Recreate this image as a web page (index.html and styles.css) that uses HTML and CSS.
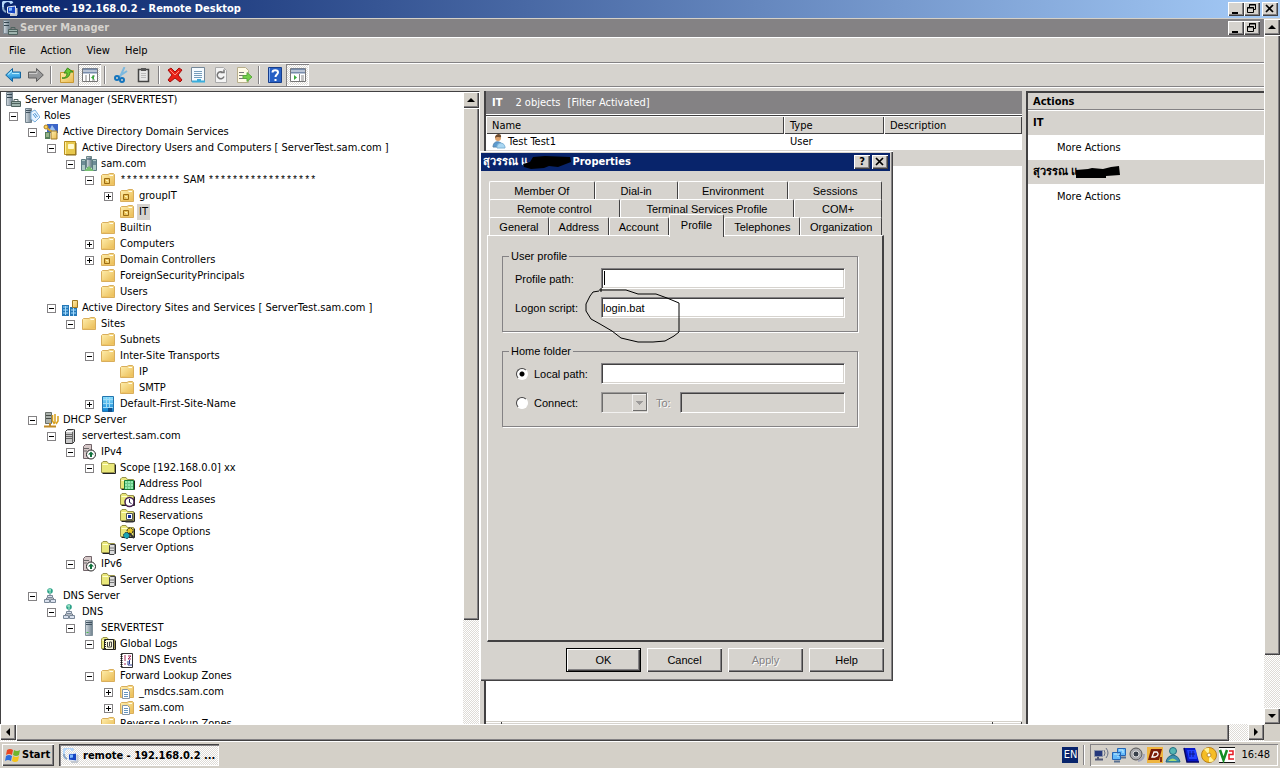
FILE: index.html
```html
<!DOCTYPE html>
<html lang="en">
<head>
<meta charset="utf-8">
<title>remote - 192.168.0.2 - Remote Desktop</title>
<link rel="stylesheet" href="styles.css">
</head>
<body>
<svg class="defs" aria-hidden="true">
  <defs>
    <linearGradient id="gold" x1="0" y1="0" x2="1" y2="1"><stop offset="0" stop-color="#fff0b0"/><stop offset="1" stop-color="#e9b94f"/></linearGradient>
    <linearGradient id="steel" x1="0" y1="0" x2="1" y2="0"><stop offset="0" stop-color="#d5dde3"/><stop offset="1" stop-color="#6d7f8c"/></linearGradient>
    <linearGradient id="sky" x1="0" y1="0" x2="0" y2="1"><stop offset="0" stop-color="#8be0ff"/><stop offset="1" stop-color="#0a7fd0"/></linearGradient>
  </defs>
  <symbol id="folder" viewBox="0 0 16 16"><path d="M1.500 13.500V3.500l1-1H8L9.500 1.500H13.500L14.500 2.500V13.500z" fill="url(#gold)" stroke="#d9ae5c"/><path d="M9.500 3.500H13" stroke="#fffdf0"/><path d="M2.500 12.500H14" stroke="#efc565"/></symbol>
  <symbol id="ou" viewBox="0 0 16 16"><use href="#folder"/><path d="M4.500 6.500h5v5h-5z" fill="#e8bf55" stroke="#9a6b12"/><path d="M6 8.500h2v2" stroke="#fff3b8" fill="none"/></symbol>
  <symbol id="yfolder" viewBox="0 0 16 16"><path d="M1.500 12.500V3l1.500-1.500h4L8.500 3.500h6v9z" fill="#e9e77a" stroke="#98934a"/><path d="M2.500 13.500h13V4.500" fill="none" stroke="#222"/><path d="M2.500 4.500H8" stroke="#ffffcf"/></symbol>
  <symbol id="server" viewBox="0 0 16 16"><path d="M4.500.5h7v15h-7z" fill="url(#steel)" stroke="#80909a"/><path d="M5 2.500h6M5 4.500h6" stroke="#40525f"/><path d="M5.500 12.500h2" stroke="#4bc04b"/></symbol>
  <symbol id="manager" viewBox="0 0 16 16"><path d="M1.500.5h6v13h-6z" fill="url(#steel)" stroke="#7d8b94"/><path d="M2 2.500h5M2 5.500h5" stroke="#33454f"/><path d="M6.500 9.500h9v5h-9z" fill="#9fb4ae" stroke="#4e625e"/><path d="M9 9.500v-2h4v2M6 11.500h9" fill="none" stroke="#4e625e"/></symbol>
  <symbol id="roles" viewBox="0 0 16 16"><path d="M1.500.5h6v14h-6z" fill="url(#steel)" stroke="#72828c"/><path d="M2 2.500h5M2 4.500h5" stroke="#41525e"/><path d="M7 4l4-2 5 7-5 5-4-3z" fill="#e8f4ff" stroke="#7ab0de"/><path d="M9 6l3 4M10.500 5l3 4" stroke="#4a94d4"/></symbol>
  <symbol id="adds" viewBox="0 0 16 16"><path d="M4 0h11v9H4z" fill="#3c65c8"/><path d="M9 1l4 6H6z" fill="#9fc1ef"/><circle cx="3" cy="3" r="2" fill="#ffd55a" stroke="#af8125"/><path d="M4.500 4.500L9 8" stroke="#dca72e" stroke-width="2"/><path d="M2 8h5v7H2z" fill="#567d59"/><path d="M8 7h6v8H8z" fill="url(#gold)" stroke="#9d7927"/><path d="M3 10h3M3 12h3" stroke="#d3eab9"/></symbol>
  <symbol id="book" viewBox="0 0 16 16"><path d="M2.500 1.500h11v13h-11z" fill="#e7c84d" stroke="#b99020"/><path d="M3.500 2v12" stroke="#fff0a0"/><path d="M6.500 4.500h5v4h-5z" fill="#fffad1" stroke="#fffad1"/><path d="M14 3v12H4" fill="none" stroke="#876a1a"/></symbol>
  <symbol id="domain" viewBox="0 0 16 16"><path d="M5.500.5h5v11h-5z" fill="url(#steel)" stroke="#6b8789"/><path d="M.5 3.500h4v11h-4zM11.500 3.500h4v11h-4z" fill="#adc9c5" stroke="#5c7b82"/><path d="M1 6h3M12 6h3M6 3h4M1 8h3M12 8h3" stroke="#2f5068"/><path d="M3 15l5-5 5 5z" fill="#76c070"/></symbol>
  <symbol id="sites" viewBox="0 0 16 16"><path d="M0 5h7v11H0zM8 7h7v9H8z" fill="#2478b8"/><path d="M1 7h5M1 10h5M1 13h5M9 10h5M9 13h5M3.500 6v9M11.500 8v8" stroke="#a5ddff"/><path d="M10.500.5h5v7h-5z" fill="url(#gold)" stroke="#9e7823"/></symbol>
  <symbol id="building" viewBox="0 0 16 16"><path d="M2.500.5h11v15h-11z" fill="url(#sky)" stroke="#2374ad"/><path d="M3 3.500h10M3 7.500h10M3 11.500h10M6.500 1v10M9.500 1v10" stroke="#9fdcf7"/><path d="M8 12h4v4H8z" fill="#114e89"/></symbol>
  <symbol id="dhcp" viewBox="0 0 16 16"><path d="M2.500.5h6v11h-6z" fill="#aab0ab" stroke="#69706a"/><path d="M3 3.500h5M3 6.500h5" stroke="#454b47"/><path d="M9.500 3v6l2 3M12 2v9M15 4v5l-2 3" fill="none" stroke="#d9a01a" stroke-width="1.500"/><path d="M1 14.500h12M7 11v4" stroke="#c08a25" stroke-width="2"/></symbol>
  <symbol id="tower" viewBox="0 0 16 16"><path d="M3.500 3.500l2-2h7v12l-2 2h-7z" fill="#c8c8c8" stroke="#333"/><path d="M4 6.500h6M4 8.500h6M4 10.500h6M10.500 4v11" stroke="#666"/><path d="M4 3.500h6l2-2" stroke="#fff" fill="none"/></symbol>
  <symbol id="ip" viewBox="0 0 16 16"><path d="M2.500 2.500l2-2h6v12l-2 2h-6z" fill="#d6c8c8" stroke="#72656a"/><path d="M3 4.500h5M3 7h3" stroke="#666"/><circle cx="10" cy="10.500" r="4.500" fill="#fff" stroke="#222"/><path d="M10 7.500l3 3h-2v2.500H9v-2.500H7z" fill="#11703d"/></symbol>
  <symbol id="pool" viewBox="0 0 16 16"><use href="#yfolder"/><path d="M5.500 4.500h9v9h-9z" fill="#92ebb0" stroke="#167b35"/><path d="M8.500 5v8M11.500 5v8M6 7.500h8M6 10.500h8" stroke="#6cc488"/></symbol>
  <symbol id="lease" viewBox="0 0 16 16"><use href="#yfolder"/><circle cx="10.500" cy="10" r="4.500" fill="#fff" stroke="#462052" stroke-width="1.500"/><path d="M10.500 7v3.500l2 1" fill="none" stroke="#22134b"/></symbol>
  <symbol id="reserve" viewBox="0 0 16 16"><use href="#yfolder"/><path d="M7.500 5.500h6v6h-6z" fill="#fff" stroke="#555"/><path d="M9 7h3v3H9z" fill="#0a2a9a"/><path d="M6.500 13.500h8" stroke="#333" stroke-width="2"/></symbol>
  <symbol id="scope" viewBox="0 0 16 16"><use href="#yfolder"/><circle cx="11" cy="7" r="3" fill="#e9c727" stroke="#222" stroke-dasharray="2 1"/><circle cx="7.500" cy="11.500" r="3" fill="#19a4b5" stroke="#152e33" stroke-dasharray="2 1"/><path d="M10 9l5 5" stroke="#333" stroke-width="2"/></symbol>
  <symbol id="sopt" viewBox="0 0 16 16"><use href="#yfolder"/><path d="M9.500 5.500l1-1h4.500v9l-1 1H9.500z" fill="#ddd" stroke="#444"/><path d="M10 8h4M10 10.500h4" stroke="#777"/></symbol>
  <symbol id="dns" viewBox="0 0 16 16"><circle cx="7" cy="3" r="2.800" fill="#2ba087"/><path d="M5 2h3M7 1v4" stroke="#b2f3d4"/><path d="M7 6v4M3.500 12v-2h7v2" stroke="#6a7584" fill="none"/><path d="M4.500 7.500h5v2h-5zM1.500 11.500h5v3h-5zM7.500 11.500h5v3h-5z" fill="#d9e0ed" stroke="#7a8898"/></symbol>
  <symbol id="logs" viewBox="0 0 16 16"><use href="#yfolder"/><path d="M4.500 3.500h9v10h-9z" fill="#f7f7dd" stroke="#222"/><path d="M5.500 4v9" stroke="#222" stroke-dasharray="1 1"/><path d="M7.500 6v5h4V6h-2v4" fill="none" stroke="#444"/></symbol>
  <symbol id="events" viewBox="0 0 16 16"><path d="M2.500 1.500h11v14h-11z" fill="#fff" stroke="#333"/><path d="M2.500 2v13" stroke="#111" stroke-width="2" stroke-dasharray="1 1"/><path d="M6 3v6M6 11v2M9 4h3l-3 3h3" stroke="#a5285c" fill="none"/><path d="M9 9v4h4M10.500 8v4" stroke="#283c92" fill="none"/></symbol>
  <symbol id="zone" viewBox="0 0 16 16"><use href="#folder"/><path d="M3.500 5.500h5l2 2v7h-7z" fill="#fff" stroke="#8695a4"/><path d="M5 8.500h4M5 10.500h4M5 12.500h4" stroke="#6495bf"/></symbol>
  <symbol id="remote" viewBox="0 0 16 16"><path d="M1 7a5 5 0 0 1 9-4.500" fill="none" stroke="#b7d8fb" stroke-width="3"/><path d="M1 6a5 5 0 0 0 3 5" fill="none" stroke="#8aa7c8" stroke-width="2"/><path d="M5.500 6l8-1v8l-8-1z" fill="#1645c2" stroke="#e6edf7"/><path d="M7 7l3-.5v3L7 10z" fill="#80baff"/><path d="M8 14h7M14.500 7v7" stroke="#c3c8cf" stroke-width="2"/></symbol>
  <symbol id="back" viewBox="0 0 16 16"><path d="M.7 8L7.500 1.500V5h8v6h-8v3.500z" fill="url(#sky)" stroke="#15659e"/><path d="M3 7.500L7 4M7 6.500h7" stroke="#b9efff" fill="none"/></symbol>
  <symbol id="forward" viewBox="0 0 16 16"><path d="M15.300 8L8.500 1.500V5h-8v6h8v3.500z" fill="#989898" stroke="#5e5e5e"/><path d="M1 6.500h8V4" stroke="#ccc" fill="none"/></symbol>
  <symbol id="up" viewBox="0 0 16 16"><path d="M1.500 15.500v-10h5l1-2h7v12z" fill="url(#gold)" stroke="#c99933"/><path d="M3 11c4 0 5-2 5-5H5l3.500-5L14 5h-3c0 4-3 7-8 6z" fill="#68c735" stroke="#378916"/></symbol>
  <symbol id="tree-pane" viewBox="0 0 16 16"><path d="M.5 1.500h15v13H.5z" fill="#fff" stroke="#777"/><path d="M1 2.500h14M1 5.500h14" stroke="#788cab" stroke-width="2"/><path d="M7.500 7v7M3 9h2M3 11h2M3 13h2M10 9h3M10 13h3" stroke="#888"/><path d="M12 8v5l-3-2.500z" fill="#3aa83a"/></symbol>
  <symbol id="action-pane" viewBox="0 0 16 16"><path d="M.5 1.500h15v13H.5z" fill="#fff" stroke="#777"/><path d="M1 2.500h14M1 5.500h14" stroke="#788cab" stroke-width="2"/><path d="M9.500 7v7M11 9h3M11 11h3M11 13h3" stroke="#888"/><path d="M4 8v5l3-2.500z" fill="#3aa83a"/></symbol>
  <symbol id="cut" viewBox="0 0 16 16"><path d="M11.500 0L7 10M14 4L5 10" stroke="#7cb9df" stroke-width="2"/><circle cx="4" cy="11" r="2" fill="none" stroke="#1374bd" stroke-width="2"/><circle cx="9" cy="13" r="2" fill="none" stroke="#1374bd" stroke-width="2"/></symbol>
  <symbol id="paste" viewBox="0 0 16 16"><path d="M2.500 2.500h10v12h-10z" fill="#e7e7e7" stroke="#444" stroke-width="1.500"/><path d="M5 1h5v3H5z" fill="#555"/><path d="M5 6.500h5M5 8.500h5M5 10.500h5" stroke="#bbb"/></symbol>
  <symbol id="delete" viewBox="0 0 16 16"><path d="M1 3l3-2 4 4 4-4 3 2-4 5 4 5-2 2-5-4-5 4-2-2 4-5z" fill="#e82117" stroke="#a60e0c"/><path d="M3 3l5 5 4-4" stroke="#ff8a7b" fill="none"/></symbol>
  <symbol id="props" viewBox="0 0 16 16"><path d="M1.500.5h13v14h-13z" fill="#f5fbff" stroke="#758899"/><path d="M4 4.500h8M4 6.500h8M4 8.500h8M4 10.500h8" stroke="#779dba"/><path d="M2 14.500h13M7 13h4" stroke="#3aaedc" stroke-width="2"/></symbol>
  <symbol id="refresh" viewBox="0 0 16 16"><path d="M2.500.5h8l3 3v12h-11z" fill="#f4f4f4" stroke="#aaa"/><path d="M10 5.500a3.500 3.500 0 1 0 1 4M7.500 5.500h3.500V2.500" fill="none" stroke="#777" stroke-width="1.500"/></symbol>
  <symbol id="export" viewBox="0 0 16 16"><path d="M1.500.5h8l3 3v12h-11z" fill="#fffbe6" stroke="#b7ae8c"/><path d="M3 5.500h5M3 8.500h4M3 11.500h5" stroke="#777"/><path d="M7 8.500h4v-3l5 4.500-5 4.500v-3H7z" fill="#75cf49" stroke="#5aa83f"/></symbol>
  <symbol id="help" viewBox="0 0 16 16"><path d="M1.500.5h13v15h-13z" fill="#2860c4" stroke="#173d8b"/><path d="M2.500 1v14" stroke="#82aff4"/><path d="M5.500 5.500c0-3 5.500-3 5.500 0 0 2-2.500 2-2.500 4.500M8.500 12v2" fill="none" stroke="#fff" stroke-width="2"/></symbol>
  <symbol id="user" viewBox="0 0 16 16"><circle cx="6" cy="4" r="3" fill="#dba06a"/><path d="M3 4c0-5 7-5 6-1-2 1-4-1-6 1z" fill="#6e4b2d"/><path d="M1 13c0-7 8-7 11 0z" fill="#5b9bd0" stroke="#5b87ad"/><path d="M5 14c-1-6 8-7 8 0z" fill="#a9d7f3" stroke="#7fb2d4"/></symbol>
  <symbol id="flag" viewBox="0 0 16 16"><path d="M2 3q3-2 6 0L7 8Q4 6 1 8z" fill="#e84622"/><path d="M9 3q3 2 6 0l-1 5q-3 2-6 0z" fill="#70b52c"/><path d="M1 9q3-2 6 0l-1 5q-3-2-6 0z" fill="#2c6ede"/><path d="M8 9q3 2 6 0l-1 5q-3 2-6 0z" fill="#f5c318"/></symbol>
  <symbol id="min" viewBox="0 0 12 12"><path d="M2 9h6v2H2z"/></symbol>
  <symbol id="restore" viewBox="0 0 12 12"><path d="M3.500 4V1.500h6v5H8M3 2h7" fill="none" stroke="#000"/><path d="M1.500 4.500h6v5h-6zM1 5h7" fill="none" stroke="#000"/></symbol>
  <symbol id="close" viewBox="0 0 12 12"><path d="M2 2l7 7M9 2l-7 7" stroke="#000" stroke-width="1.700"/></symbol>
  <symbol id="t-wireless" viewBox="0 0 16 16"><path d="M1.500 3.500h8v6h-8z" fill="#25387c" stroke="#8b93a8"/><path d="M2 12.500h8M5 10v2" stroke="#535a78" stroke-width="2"/><path d="M11 3q2 3 0 6M13 1q4 5 0 10" fill="none" stroke="#666f86"/></symbol>
  <symbol id="t-network" viewBox="0 0 16 16"><path d="M6.500 1.500h8v7h-8zM1.500 5.500h8v7h-8z" fill="#65bbfa" stroke="#2465b5"/><path d="M8 3h4v3M3 7h4v3" fill="none" stroke="#c6efff"/><path d="M3 14.500h6M10 10.500h5" stroke="#5a7191" stroke-width="2"/></symbol>
  <symbol id="t-sound" viewBox="0 0 16 16"><circle cx="7" cy="7" r="6" fill="#a9aaae" stroke="#555"/><circle cx="7" cy="7" r="3" fill="#38404a" stroke="#ddd"/><path d="M9 14q6-1 6-7" fill="none" stroke="#a2a5ba" stroke-width="2"/></symbol>
  <symbol id="t-dict" viewBox="0 0 16 16"><path d="M0 0h16v16H0z" fill="#efb540"/><path d="M4 2h11l-3 11H1z" fill="#7b1d08"/><path d="M7 5h3q3 3-2 5H5z" fill="none" stroke="#fff" stroke-width="1.300"/><path d="M14 10v5" stroke="#8c3010" stroke-width="2"/></symbol>
  <symbol id="t-person" viewBox="0 0 16 16"><circle cx="8" cy="4" r="3.500" fill="#55b6b3" stroke="#226c82"/><path d="M1 15q1-6 7-7 6 1 7 7z" fill="#3c8fb1" stroke="#226c82"/><path d="M3 14q5-5 9 0z" fill="#a4dc75"/></symbol>
  <symbol id="t-app" viewBox="0 0 16 16"><path d="M1 1h11l4 14H4z" fill="#0717c9"/><path d="M4 3h9l1 9H6z" fill="#2141ff"/><path d="M1 1l3 14h12" fill="none" stroke="#070765" stroke-width="1.500"/><path d="M7 4v6M10 4v6M6 7h6" stroke="#0a168b"/></symbol>
  <symbol id="t-disc" viewBox="0 0 16 16"><circle cx="8" cy="8" r="7.500" fill="#f5bd24" stroke="#b88019"/><path d="M8 8L3 2a8 8 0 0 1 5-1zM8 8l5 6a8 8 0 0 1-5 1z" fill="#fff39b"/><circle cx="8" cy="8" r="2" fill="#fff" stroke="#bd8c27"/></symbol>
  <symbol id="t-vnc" viewBox="0 0 16 16"><path d="M0 0h16v16H0z" fill="#fff"/><path d="M0 .5h16M0 15.500h16" stroke="#111"/><path d="M1 3l3.500 10L8 3" fill="none" stroke="#168c22" stroke-width="2.500"/><path d="M10 4h4v3.500h-4V12h5" fill="none" stroke="#e51b25" stroke-width="1.500"/></symbol>
</svg>

<header class="rdp-title">
  <svg class="icon"><use href="#remote"/></svg>
  <h1>remote - 192.168.0.2 - Remote Desktop</h1>
  <div class="winbtns">
    <button aria-label="Minimize"><svg><use href="#min"/></svg></button><button aria-label="Restore"><svg><use href="#restore"/></svg></button><button class="apart" aria-label="Close"><svg><use href="#close"/></svg></button>
  </div>
</header>

<div class="stage">
  <main class="viewport">
    <div class="app-title">
      <svg class="icon"><use href="#manager"/></svg>
      <h2>Server Manager</h2>
      <div class="winbtns">
        <button aria-label="Minimize"><svg><use href="#min"/></svg></button><button aria-label="Restore"><svg><use href="#restore"/></svg></button>
      </div>
    </div>
    <nav class="menu">
      <button>File</button><button>Action</button><button>View</button><button>Help</button>
    </nav>
    <div class="toolbar">
      <button aria-label="Back"><svg class="icon"><use href="#back"/></svg></button>
      <button aria-label="Forward"><svg class="icon"><use href="#forward"/></svg></button>
      <span class="sep"></span>
      <button aria-label="Up"><svg class="icon"><use href="#up"/></svg></button>
      <button class="pressed" aria-label="Console tree"><svg class="icon"><use href="#tree-pane"/></svg></button>
      <span class="sep"></span>
      <button aria-label="Cut"><svg class="icon"><use href="#cut"/></svg></button>
      <button aria-label="Paste"><svg class="icon"><use href="#paste"/></svg></button>
      <span class="sep"></span>
      <button aria-label="Delete"><svg class="icon"><use href="#delete"/></svg></button>
      <button aria-label="Properties"><svg class="icon"><use href="#props"/></svg></button>
      <button aria-label="Refresh"><svg class="icon"><use href="#refresh"/></svg></button>
      <button aria-label="Export list"><svg class="icon"><use href="#export"/></svg></button>
      <span class="sep"></span>
      <button aria-label="Help topics"><svg class="icon"><use href="#help"/></svg></button>
      <button class="pressed" aria-label="Action pane"><svg class="icon"><use href="#action-pane"/></svg></button>
    </div>

    <div class="panes">
      <section class="pane tree-wrap">
        <ul class="tree">
          <li><div class="node"><svg class="icon"><use href="#manager"/></svg><span>Server Manager (SERVERTEST)</span></div>
          <ul>
            <li><div class="node"><button class="tog" aria-label="Collapse"></button><svg class="icon"><use href="#roles"/></svg><span>Roles</span></div>
            <ul>
              <li><div class="node"><button class="tog" aria-label="Collapse"></button><svg class="icon"><use href="#adds"/></svg><span>Active Directory Domain Services</span></div>
              <ul>
                <li><div class="node"><button class="tog" aria-label="Collapse"></button><svg class="icon"><use href="#book"/></svg><span>Active Directory Users and Computers [ ServerTest.sam.com ]</span></div>
                <ul>
                  <li><div class="node"><button class="tog" aria-label="Collapse"></button><svg class="icon"><use href="#domain"/></svg><span>sam.com</span></div>
                  <ul>
                    <li><div class="node"><button class="tog" aria-label="Collapse"></button><svg class="icon"><use href="#ou"/></svg><span><i class="stars">**********</i> SAM <i class="stars">******************</i></span></div>
                    <ul>
                      <li><div class="node"><button class="tog plus" aria-label="Expand"></button><svg class="icon"><use href="#ou"/></svg><span>groupIT</span></div></li>
                      <li><div class="node"><svg class="icon"><use href="#ou"/></svg><span class="chosen">IT</span></div></li>
                    </ul></li>
                    <li><div class="node"><svg class="icon"><use href="#folder"/></svg><span>Builtin</span></div></li>
                    <li><div class="node"><button class="tog plus" aria-label="Expand"></button><svg class="icon"><use href="#folder"/></svg><span>Computers</span></div></li>
                    <li><div class="node"><button class="tog plus" aria-label="Expand"></button><svg class="icon"><use href="#ou"/></svg><span>Domain Controllers</span></div></li>
                    <li><div class="node"><svg class="icon"><use href="#folder"/></svg><span>ForeignSecurityPrincipals</span></div></li>
                    <li><div class="node"><svg class="icon"><use href="#folder"/></svg><span>Users</span></div></li>
                  </ul></li>
                </ul></li>
                <li><div class="node"><button class="tog" aria-label="Collapse"></button><svg class="icon"><use href="#sites"/></svg><span>Active Directory Sites and Services [ ServerTest.sam.com ]</span></div>
                <ul>
                  <li><div class="node"><button class="tog" aria-label="Collapse"></button><svg class="icon"><use href="#folder"/></svg><span>Sites</span></div>
                  <ul>
                    <li><div class="node"><svg class="icon"><use href="#folder"/></svg><span>Subnets</span></div></li>
                    <li><div class="node"><button class="tog" aria-label="Collapse"></button><svg class="icon"><use href="#folder"/></svg><span>Inter-Site Transports</span></div>
                    <ul>
                      <li><div class="node"><svg class="icon"><use href="#folder"/></svg><span>IP</span></div></li>
                      <li><div class="node"><svg class="icon"><use href="#folder"/></svg><span>SMTP</span></div></li>
                    </ul></li>
                    <li><div class="node"><button class="tog plus" aria-label="Expand"></button><svg class="icon"><use href="#building"/></svg><span>Default-First-Site-Name</span></div></li>
                  </ul></li>
                </ul></li>
              </ul></li>
              <li><div class="node"><button class="tog" aria-label="Collapse"></button><svg class="icon"><use href="#dhcp"/></svg><span>DHCP Server</span></div>
              <ul>
                <li><div class="node"><button class="tog" aria-label="Collapse"></button><svg class="icon"><use href="#tower"/></svg><span>servertest.sam.com</span></div>
                <ul>
                  <li><div class="node"><button class="tog" aria-label="Collapse"></button><svg class="icon"><use href="#ip"/></svg><span>IPv4</span></div>
                  <ul>
                    <li><div class="node"><button class="tog" aria-label="Collapse"></button><svg class="icon"><use href="#yfolder"/></svg><span>Scope [192.168.0.0] xx</span></div>
                    <ul>
                      <li><div class="node"><svg class="icon"><use href="#pool"/></svg><span>Address Pool</span></div></li>
                      <li><div class="node"><svg class="icon"><use href="#lease"/></svg><span>Address Leases</span></div></li>
                      <li><div class="node"><svg class="icon"><use href="#reserve"/></svg><span>Reservations</span></div></li>
                      <li><div class="node"><svg class="icon"><use href="#scope"/></svg><span>Scope Options</span></div></li>
                    </ul></li>
                    <li><div class="node"><svg class="icon"><use href="#sopt"/></svg><span>Server Options</span></div></li>
                  </ul></li>
                  <li><div class="node"><button class="tog" aria-label="Collapse"></button><svg class="icon"><use href="#ip"/></svg><span>IPv6</span></div>
                  <ul>
                    <li><div class="node"><svg class="icon"><use href="#sopt"/></svg><span>Server Options</span></div></li>
                  </ul></li>
                </ul></li>
              </ul></li>
              <li><div class="node"><button class="tog" aria-label="Collapse"></button><svg class="icon"><use href="#dns"/></svg><span>DNS Server</span></div>
              <ul>
                <li><div class="node"><button class="tog" aria-label="Collapse"></button><svg class="icon"><use href="#dns"/></svg><span>DNS</span></div>
                <ul>
                  <li><div class="node"><button class="tog" aria-label="Collapse"></button><svg class="icon"><use href="#server"/></svg><span>SERVERTEST</span></div>
                  <ul>
                    <li><div class="node"><button class="tog" aria-label="Collapse"></button><svg class="icon"><use href="#logs"/></svg><span>Global Logs</span></div>
                    <ul>
                      <li><div class="node"><svg class="icon"><use href="#events"/></svg><span>DNS Events</span></div></li>
                    </ul></li>
                    <li><div class="node"><button class="tog" aria-label="Collapse"></button><svg class="icon"><use href="#folder"/></svg><span>Forward Lookup Zones</span></div>
                    <ul>
                      <li><div class="node"><button class="tog plus" aria-label="Expand"></button><svg class="icon"><use href="#zone"/></svg><span>_msdcs.sam.com</span></div></li>
                      <li><div class="node"><button class="tog plus" aria-label="Expand"></button><svg class="icon"><use href="#zone"/></svg><span>sam.com</span></div></li>
                    </ul></li>
                    <li><div class="node"><svg class="icon"><use href="#folder"/></svg><span>Reverse Lookup Zones</span></div></li>
                  </ul></li>
                </ul></li>
              </ul></li>
            </ul></li>
          </ul></li>
        </ul>
        <div class="vscroll tree-scroll">
          <button class="arrow up" aria-label="Scroll up"></button><div class="thumb"></div>
        </div>
      </section>

      <section class="pane list">
        <div class="list-head"><b>IT</b><span>2 objects</span><span>[Filter Activated]</span></div>
        <table>
          <thead><tr><th class="c-name">Name</th><th class="c-type">Type</th><th>Description</th></tr></thead>
          <tbody>
            <tr><td><div class="cell"><svg class="icon"><use href="#user"/></svg>Test Test1</div></td><td>User</td><td></td></tr>
            <tr class="chosen"><td></td><td></td><td></td></tr>
          </tbody>
        </table>
        <div class="strip"><i></i><i></i><i></i></div>
      </section>

      <aside class="pane actions">
        <h3 class="caption">Actions</h3>
        <h4>IT</h4>
        <a href="#">More Actions</a>
        <h4><span>สุวรรณ แ</span><svg class="mark" viewBox="0 0 46 12"><path d="M1 4l12-1 4-1 11 1 8-2 8-1 1 9-14 1v2H1z"/></svg></h4>
        <a href="#">More Actions</a>
      </aside>
    </div>

    <div class="dialog" role="dialog" aria-labelledby="dlg-title">
      <div class="dlg-title">
        <span>สุวรรณ แ</span>
        <svg class="scrawl" viewBox="0 0 50 16"><path d="M1 10l7-2 3-5 12-1 25 1 1 5-13 5-9-1-5 2-13 1-7-2z"/></svg>
        <h2 id="dlg-title">Properties</h2>
        <div class="winbtns">
          <button aria-label="What's this">?</button><button class="apart" aria-label="Close"><svg><use href="#close"/></svg></button>
        </div>
      </div>
      <div class="dlg-body">
        <div class="tabs" role="tablist">
          <div class="tabrow r1"><button role="tab">Member Of</button><button role="tab">Dial-in</button><button role="tab">Environment</button><button role="tab">Sessions</button></div>
          <div class="tabrow r2"><button role="tab">Remote control</button><button role="tab">Terminal Services Profile</button><button role="tab">COM+</button></div>
          <div class="tabrow r3"><button role="tab">General</button><button role="tab">Address</button><button role="tab">Account</button><button role="tab" class="on" aria-selected="true">Profile</button><button role="tab">Telephones</button><button role="tab">Organization</button></div>
        </div>
        <div class="sheet">
          <fieldset>
            <legend>User profile</legend>
            <div class="field"><label for="path">Profile path:</label><span class="caret-box"><input id="path" type="text"><i class="caret"></i></span></div>
            <div class="field"><label for="script">Logon script:</label><input id="script" type="text" value="login.bat"></div>
          </fieldset>
          <fieldset>
            <legend>Home folder</legend>
            <div class="field"><label><input type="radio" name="home" checked>Local path:</label><input type="text" aria-label="Local path"></div>
            <div class="field"><label><input type="radio" name="home">Connect:</label><select disabled aria-label="Drive"><option></option></select><label class="to" for="to">To:</label><input id="to" type="text" disabled></div>
          </fieldset>
          <svg class="loop" viewBox="0 0 96 58"><path d="M16 1v4M14 3h27l12 4h18l11 4 12 5v29l-5 4-9 5-12 1H53l-17-4-9-7-12-7-9-5-5-8V17l4-8 3-4 6-1" fill="none" stroke="#000"/></svg>
        </div>
        <div class="dlg-buttons">
          <button class="default">OK</button><button>Cancel</button><button disabled>Apply</button><button>Help</button>
        </div>
      </div>
    </div>
  </main>
  <div class="vscroll page-v">
    <button class="arrow up" aria-label="Scroll up"></button><div class="thumb"></div><button class="arrow down" aria-label="Scroll down"></button>
  </div>
  <div class="hscroll">
    <button class="arrow left" aria-label="Scroll left"></button><div class="thumb"></div><button class="arrow right" aria-label="Scroll right"></button>
  </div>
</div>

<footer class="taskbar">
  <button class="start"><svg class="icon"><use href="#flag"/></svg>Start</button>
  <button class="task"><svg class="icon"><use href="#remote"/></svg>remote - 192.168.0.2 ...</button>
  <button class="lang">EN</button>
  <span class="tb-sep"></span>
  <div class="tray">
    <svg class="icon"><use href="#t-wireless"/></svg><svg class="icon"><use href="#t-network"/></svg><svg class="icon"><use href="#t-sound"/></svg><svg class="icon"><use href="#t-dict"/></svg><svg class="icon"><use href="#t-person"/></svg><svg class="icon"><use href="#t-app"/></svg><svg class="icon"><use href="#t-disc"/></svg><svg class="icon"><use href="#t-vnc"/></svg>
    <time>16:48</time>
  </div>
</footer>
</body>
</html>
```
FILE: styles.css
```css
:root {
  --face: #d6d3ce;
  --bar: #d4d0c8;
  --shade: #848284;
  --dark: #424142;
  --navy: #08246b;
  --ui: "DejaVu Sans Condensed", "Noto Sans", sans-serif;
  --dlg: "Liberation Sans", "Noto Sans", sans-serif;
  --dither: repeating-conic-gradient(#fff 0 25%, #dedbd6 0 50%) 0 0 / 2px 2px;
}
* { box-sizing: border-box; }
body {
  margin: 0;
  height: 100vh;
  display: flex;
  flex-direction: column;
  overflow: hidden;
  background: var(--face);
  color: #000;
  font: 11px/16px var(--ui);
}
h1, h2, h3, h4, ul { margin: 0; padding: 0; font-size: 11px; }
button, input, select { font: inherit; color: inherit; margin: 0; padding: 0; border: 0; border-radius: 0; background: none; }
.defs { position: absolute; width: 0; height: 0; }
.icon { width: 16px; height: 16px; flex: none; display: block; }

/* title bars */
.rdp-title {
  display: flex;
  align-items: center;
  height: 19px;
  flex: none;
  padding: 0 2px;
  gap: 2px;
  color: #fff;
  background: linear-gradient(90deg, #08246b, #a5cbf7);
  border-bottom: 1px solid var(--bar);
}
.winbtns { display: flex; margin-left: auto; }
.winbtns button {
  width: 16px;
  height: 14px;
  display: grid;
  place-items: center;
  color: #000;
  font-weight: bold;
  line-height: 12px;
  background: var(--face);
  box-shadow: inset 1px 1px #fff, inset -1px -1px var(--dark), inset -2px -2px var(--shade);
}
.winbtns svg { width: 12px; height: 12px; }
.winbtns .apart { margin-left: 2px; }
.app-title {
  display: flex;
  align-items: center;
  gap: 2px;
  height: 18px;
  flex: none;
  padding: 0 4px 0 2px;
  background: var(--shade);
  color: var(--face);
}

.stage {
  flex: 1;
  min-height: 0;
  display: grid;
  grid-template: minmax(0, 1fr) 17px / minmax(0, 1fr) 16px;
  background: var(--bar);
}
.viewport {
  position: relative;
  display: flex;
  flex-direction: column;
  min-height: 0;
  background: var(--face);
}
.menu {
  display: flex;
  height: 26px;
  flex: none;
  gap: 15px;
  padding: 2px 9px 0;
  border-top: 1px solid #fff;
  border-bottom: 1px solid var(--shade);
}
.toolbar {
  display: flex;
  height: 24px;
  flex: none;
  padding: 0 1px;
  border-top: 1px solid #fff;
  border-bottom: 1px solid var(--shade);
}
.toolbar button { width: 23px; height: 22px; display: grid; place-items: center; }
.toolbar .pressed { background: var(--dither); box-shadow: inset 1px 1px var(--shade), inset -1px -1px #fff; }
.sep { width: 2px; height: 18px; margin: 2px 3px; border-left: 1px solid var(--shade); border-right: 1px solid #fff; }

/* panes */
.panes {
  flex: 1;
  min-height: 0;
  display: grid;
  grid-template-columns: 480fr 538fr 238fr;
  grid-template-rows: minmax(0, 1fr);
  gap: 4px;
  padding-top: 3px;
  border-top: 1px solid #fff;
}
.pane { min-width: 0; overflow: hidden; background: #fff; border-top: 2px solid var(--dark); border-left: 2px solid var(--dark); }
.tree-wrap { display: flex; border-left-width: 1px; border-top-width: 1px; border-right: 1px solid #fff; }
.tree, .tree ul { list-style: none; }
.tree { flex: 1; min-width: 0; padding-left: 4px; white-space: nowrap; }
.tree ul { padding-left: 19px; }
.node { display: flex; align-items: center; height: 16px; }
.node span { padding: 0 2px; margin-left: 2px; }
.stars { font: normal 10px/12px "Liberation Mono", monospace; }
.chosen { background: var(--face); }
.tog { flex: none; width: 9px; height: 9px; margin: 0 6px 0 -15px; border: 1px solid var(--shade); background: linear-gradient(#000, #000) center / 5px 1px no-repeat #fff; }
.tog.plus { background: linear-gradient(#000, #000) center / 5px 1px no-repeat, linear-gradient(#000, #000) center / 1px 5px no-repeat #fff; }

.list { display: flex; flex-direction: column; border-top: 0; }
.list-head { display: flex; align-items: center; gap: 7px; flex: none; height: 24px; padding-left: 6px; background: var(--shade); color: #fff; border-bottom: 1px solid #fff; }
.list-head b { margin-right: 6px; }
table { width: 100%; table-layout: fixed; border-collapse: separate; border-spacing: 0; border-top: 1px solid var(--dark); }
th { height: 18px; padding: 0 0 0 6px; text-align: left; font-weight: normal; line-height: 15px; background: var(--face); box-shadow: inset 1px 1px #fff, inset -1px -1px var(--dark); }
td { height: 16px; padding: 0 0 0 6px; line-height: 16px; }
.c-name { width: 298px; }
.c-type { width: 100px; }
.cell { display: flex; }
.strip { display: flex; justify-content: space-between; flex: none; height: 3px; margin-top: auto; background: var(--face); border-top: 1px solid var(--bar); box-shadow: inset 0 1px #fff; }
.strip i { width: 16px; border-right: 1px solid var(--dark); }
.strip i:nth-child(2) { flex: 1; margin-right: 13px; }

.actions h3, .actions h4 { padding-left: 5px; background: var(--face); }
.actions .caption { height: 17px; line-height: 17px; border-bottom: 1px solid var(--shade); }
.actions h4 { display: flex; align-items: center; height: 25px; border-top: 1px solid #fff; }
.actions a { display: block; height: 24px; padding-left: 29px; line-height: 26px; color: #000; text-decoration: none; }
.mark { width: 46px; height: 12px; margin-left: -3px; }

/* scrollbars */
.vscroll, .hscroll { display: flex; background: var(--dither); }
.vscroll { flex-direction: column; width: 16px; }
.arrow, .thumb { background: var(--bar); box-shadow: inset 1px 1px #fff, inset -1px -1px var(--dark), inset -2px -2px var(--shade); }
.arrow { width: 16px; height: 16px; flex: none; display: grid; place-items: center; }
.arrow::before { content: ""; border: 4px solid transparent; }
.up::before { border-top: 0; border-bottom-color: #000; }
.down::before { border-bottom: 0; border-top-color: #000; }
.left::before { border-left: 0; border-right-color: #000; }
.right::before { border-right: 0; border-left-color: #000; }
.tree-scroll { flex: none; }
.tree-scroll .thumb { flex: 0 0 81%; }
.page-v .down { margin-top: auto; }
.page-v .thumb { flex: 0 0 88%; }
.hscroll .thumb { flex: 0 0 96%; }
.hscroll .right { margin-left: auto; }

/* properties dialog */
.dialog {
  position: absolute;
  left: 480px;
  top: 132px;
  width: 413px;
  padding: 2px 3px 9px 1px;
  background: var(--face);
  box-shadow: inset 1px 1px #fff, inset -1px -1px var(--dark), inset -2px -2px var(--shade);
  font-family: var(--dlg);
}
.dlg-title { display: flex; align-items: center; height: 18px; padding: 0 2px; background: var(--navy); color: #fff; font: bold 11px/16px var(--ui); }
.scrawl { width: 50px; height: 16px; margin-left: -6px; }
.dlg-body { padding: 10px 6px 0; }
.tabs { padding: 0 2px; }
.tabrow { display: grid; height: 18px; }
.r1 { grid-template-columns: 106fr 83fr 111fr 94fr; }
.r2 { grid-template-columns: 131fr 175fr 88fr; }
.r3 { grid-template-columns: 60fr 60fr 60fr 56fr 76fr 82fr; }
.tabrow button { border-top: 1px solid #fff; border-left: 1px solid #fff; border-right: 1px solid var(--dark); border-radius: 2px 2px 0 0; white-space: nowrap; line-height: 18px; }
.tabrow .on { position: relative; z-index: 1; margin: -3px 0 -1px; padding-bottom: 3px; background: var(--face); }
.sheet { position: relative; height: 407px; padding: 14px 24px 0 14px; border: 1px solid #fff; border-right: 2px solid var(--dark); border-bottom: 2px solid var(--dark); }
fieldset { margin: 0 0 13px; padding: 5px 12px 13px; border: 1px solid var(--shade); box-shadow: 1px 1px #fff; }
legend { height: 13px; margin-left: -6px; padding: 0 2px; line-height: 13px; background: var(--face); }
.field { display: flex; align-items: center; }
.field + .field { margin-top: 8px; }
.field > label:first-child { width: 86px; flex: none; display: flex; align-items: center; }
.field input[type="text"] { flex: 1; min-width: 0; width: 100%; height: 21px; padding: 0 1px; background: #fff; border: 1px solid; border-color: var(--shade) #fff #fff var(--shade); box-shadow: inset 1px 1px var(--dark), inset -1px -1px var(--face); }
.caret-box { position: relative; flex: 1; display: flex; }
.caret { position: absolute; left: 3px; top: 3px; width: 1px; height: 14px; background: #000; }
.field input[type="radio"] { appearance: none; width: 12px; height: 12px; margin: 0 6px 0 1px; border-radius: 50%; background: #fff; border: 1px solid; border-color: var(--dark) #fff #fff var(--dark); }
.field input[type="radio"]:checked { background: radial-gradient(circle, #000 2px, #fff 3px); }
.field input:disabled[type="text"] { background: var(--face); }
.field select { appearance: none; width: 47px; height: 21px; flex: none; border: 1px solid; border-color: var(--shade) #fff #fff var(--shade); background:
  linear-gradient(var(--shade), var(--shade)) 34px 8px / 7px 1px no-repeat,
  linear-gradient(var(--shade), var(--shade)) 35px 9px / 5px 1px no-repeat,
  linear-gradient(var(--shade), var(--shade)) 36px 10px / 3px 1px no-repeat,
  linear-gradient(var(--shade), var(--shade)) 37px 11px / 1px 1px no-repeat,
  linear-gradient(90deg, #fff 1px, transparent 1px 14px, var(--dark) 14px) 30px 1px / 15px 17px no-repeat,
  linear-gradient(#fff, #fff) 30px 1px / 15px 1px no-repeat,
  linear-gradient(var(--dark), var(--dark)) 30px 17px / 15px 1px no-repeat,
  var(--face);
  box-shadow: inset 1px 1px var(--dark); }
.field .to { width: 32px; padding-left: 8px; color: var(--shade); text-shadow: 1px 1px #fff; flex: none; }
.loop { position: absolute; left: 97px; top: 51px; width: 96px; height: 58px; pointer-events: none; }
.dlg-buttons { display: flex; justify-content: flex-end; gap: 6px; padding-top: 6px; }
.dlg-buttons button { width: 75px; height: 24px; box-shadow: inset 1px 1px #fff, inset -1px -1px var(--dark), inset -2px -2px var(--shade); }
.dlg-buttons .default { border: 1px solid #000; }
.dlg-buttons button:disabled { color: var(--shade); text-shadow: 1px 1px #fff; }

/* taskbar */
.taskbar { display: flex; align-items: center; height: 27px; flex: none; padding: 2px 2px 1px; background: var(--bar); box-shadow: inset 0 1px #fff; }
.taskbar button { display: flex; align-items: center; }
.start { width: 52px; height: 22px; padding: 0 3px; gap: 1px; box-shadow: inset 1px 1px #fff, inset -1px -1px var(--dark), inset -2px -2px var(--shade); }
.taskbar .start, .taskbar .task { font-weight: bold; white-space: nowrap; }
.task { width: 160px; height: 22px; margin-left: 5px; padding: 1px 4px 0; gap: 4px; background: var(--dither); box-shadow: inset 1px 1px var(--dark), inset 2px 2px var(--shade), inset -1px -1px #fff; }
.taskbar .lang { margin-left: auto; width: 16px; height: 16px; justify-content: center; background: var(--navy); color: #fff; }
.tb-sep { width: 2px; height: 20px; margin: 0 5px; border-left: 1px solid var(--shade); border-right: 1px solid #fff; }
.tray { display: flex; align-items: center; gap: 2px; height: 22px; padding: 0 8px 0 3px; box-shadow: inset 1px 1px var(--shade), inset -1px -1px #fff; }
.tray time { margin-left: 4px; }
```
